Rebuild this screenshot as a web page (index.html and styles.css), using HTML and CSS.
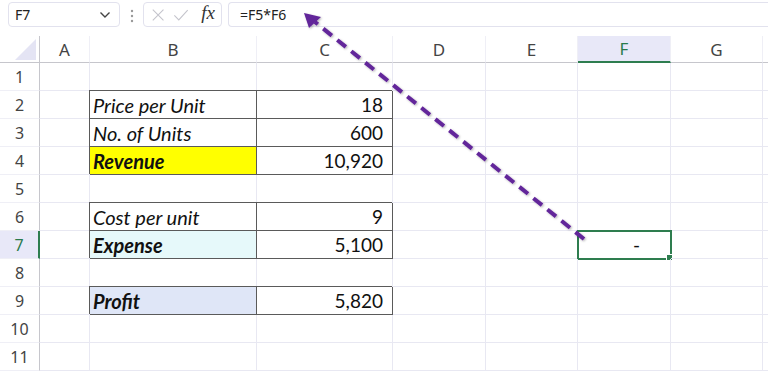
FILE: index.html
```html
<!DOCTYPE html>
<html lang="en">
<head>
    <meta charset="UTF-8">
    <meta name="viewport" content="width=device-width, initial-scale=1.0">
    <title>Profit Sheet</title>
    <link rel="stylesheet" href="styles.css">
</head>
<body>
    <div class="fbar">
        <div class="namebox">
            <span>F7</span>
            <svg width="12" height="8" viewBox="0 0 12 8"><path d="M1.5 1.5 L6 6 L10.5 1.5" fill="none" stroke="#444" stroke-width="1.4"/></svg>
        </div>
        <div class="vdots">
            <svg width="4" height="14" viewBox="0 0 4 14"><circle cx="2" cy="2" r="1.2" fill="#999"/><circle cx="2" cy="7" r="1.2" fill="#999"/><circle cx="2" cy="12" r="1.2" fill="#999"/></svg>
        </div>
        <div class="fxbox">
            <svg width="16" height="16" viewBox="0 0 16 16"><path d="M2 2 L14 14 M14 2 L2 14" stroke="#c4c4cc" stroke-width="1.2"/></svg>
            <svg width="18" height="16" viewBox="0 0 18 16"><path d="M1.5 8.5 L6.5 13.5 L16.5 2.5" fill="none" stroke="#c4c4cc" stroke-width="1.2"/></svg>
            <span class="fx">fx</span>
        </div>
        <div class="formula">=F5*F6</div>
    </div>

    <div class="sheet">
        <!-- header row -->
        <div class="corner"><span class="tri"></span></div>
        <div class="ch">A</div><div class="ch">B</div><div class="ch">C</div><div class="ch">D</div>
        <div class="ch">E</div><div class="ch active">F</div><div class="ch">G</div><div class="ch"></div>

        <div class="rh">1</div>
        <div class="c"></div><div class="c"></div><div class="c"></div><div class="c"></div><div class="c"></div><div class="c"></div><div class="c"></div><div class="c"></div>

        <div class="rh">2</div>
        <div class="c"></div><div class="c bx">Price per Unit</div><div class="c bx num">18</div><div class="c"></div><div class="c"></div><div class="c"></div><div class="c"></div><div class="c"></div>

        <div class="rh">3</div>
        <div class="c"></div><div class="c bx">No. of Units</div><div class="c bx num">600</div><div class="c"></div><div class="c"></div><div class="c"></div><div class="c"></div><div class="c"></div>

        <div class="rh">4</div>
        <div class="c"></div><div class="c bx strong yellow">Revenue</div><div class="c bx num">10,920</div><div class="c"></div><div class="c"></div><div class="c"></div><div class="c"></div><div class="c"></div>

        <div class="rh">5</div>
        <div class="c"></div><div class="c"></div><div class="c"></div><div class="c"></div><div class="c"></div><div class="c"></div><div class="c"></div><div class="c"></div>

        <div class="rh">6</div>
        <div class="c"></div><div class="c bx">Cost per unit</div><div class="c bx num">9</div><div class="c"></div><div class="c"></div><div class="c"></div><div class="c"></div><div class="c"></div>

        <div class="rh active">7</div>
        <div class="c"></div><div class="c bx strong cyan">Expense</div><div class="c bx num">5,100</div><div class="c"></div><div class="c"></div><div class="c num sel">-</div><div class="c"></div><div class="c"></div>

        <div class="rh">8</div>
        <div class="c"></div><div class="c"></div><div class="c"></div><div class="c"></div><div class="c"></div><div class="c"></div><div class="c"></div><div class="c"></div>

        <div class="rh">9</div>
        <div class="c"></div><div class="c bx strong blue">Profit</div><div class="c bx num">5,820</div><div class="c"></div><div class="c"></div><div class="c"></div><div class="c"></div><div class="c"></div>

        <div class="rh">10</div>
        <div class="c"></div><div class="c"></div><div class="c"></div><div class="c"></div><div class="c"></div><div class="c"></div><div class="c"></div><div class="c"></div>

        <div class="rh">11</div>
        <div class="c"></div><div class="c"></div><div class="c"></div><div class="c"></div><div class="c"></div><div class="c"></div><div class="c"></div><div class="c"></div>
    </div>

    <!-- arrow from F7 up to the formula -->
    <svg class="arrow" width="768" height="375" viewBox="0 0 768 375">
        <defs>
            <filter id="soft" x="-10%" y="-10%" width="120%" height="120%">
                <feDropShadow dx="1" dy="1" stdDeviation="0.8" flood-color="#000" flood-opacity="0.3"/>
            </filter>
        </defs>
        <g filter="url(#soft)">
            <line x1="584" y1="239" x2="315" y2="22" stroke="#62259a" stroke-width="4" stroke-dasharray="11 7"/>
            <path d="M304 13 L321 17 L309 28 Z" fill="#62259a"/>
        </g>
    </svg>
</body>
</html>
```

FILE: styles.css
```css
body {
    margin: 0;
    width: 768px;
    height: 375px;
    overflow: hidden;
    background: #fff;
    font-family: "Noto Sans", "Open Sans", sans-serif;
    color: #222;
    position: relative;
}

/* formula bar */
.fbar {
    display: flex;
    align-items: center;
    height: 36px;
    padding: 0 0 0 8px;
    box-sizing: border-box;
    padding-bottom: 7px;
}
.namebox {
    width: 112px;
    height: 25px;
    box-sizing: border-box;
    border: 1px solid #e2e2ee;
    border-radius: 4px;
    display: flex;
    align-items: center;
    justify-content: space-between;
    padding: 0 8px 0 6px;
    font-size: 14px;
}
.vdots {
    width: 23px;
    display: flex;
    justify-content: center;
    padding-top: 2px;
}
.fxbox {
    width: 79px;
    height: 25px;
    box-sizing: border-box;
    border: 1px solid #e2e2ee;
    border-radius: 4px;
    display: flex;
    align-items: center;
    gap: 8px;
    padding: 0 6px 0 7px;
}
.fx {
    font-family: "Liberation Serif", serif;
    font-style: italic;
    font-size: 19px;
    color: #333;
    margin-left: 4px;
    margin-top: -3px;
}
.formula {
    flex: 1;
    height: 25px;
    box-sizing: border-box;
    margin-left: 6px;
    border: 1px solid #e2e2ee;
    border-right: none;
    border-radius: 4px 0 0 4px;
    display: flex;
    align-items: center;
    padding-left: 11px;
    font-size: 14px;
}

/* grid */
.sheet {
    display: grid;
    grid-template-columns: 40px 50px 167px 136px 93px 92px 93px 92px 1fr;
    grid-template-rows: 27px repeat(11, 28px);
}
.corner {
    border-right: 1px solid #c6c6cc;
    border-bottom: 1px solid #c6c6cc;
    display: flex;
    align-items: flex-end;
    justify-content: flex-end;
    padding: 0 3px 2px 0;
}
.tri {
    width: 21px;
    height: 21px;
    background: #e4e4f4;
    clip-path: polygon(100% 0, 100% 100%, 0 100%);
}
.ch {
    border-bottom: 1px solid #c6c6cc;
    border-right: 1px solid #efeff6;
    display: flex;
    align-items: center;
    justify-content: center;
    font-size: 17px;
    color: #444;
}
.ch.active {
    background: #e8e8f8;
    color: #2a7a4c;
    border-bottom: 2px solid #2e7d4f;
}
.rh {
    border-right: 1px solid #c6c6cc;
    border-bottom: 1px solid #efeff6;
    display: flex;
    align-items: center;
    justify-content: center;
    font-size: 16px;
    color: #444;
}
.rh.active {
    background: #e8e8f8;
    color: #2a7a4c;
    border-right: 2px solid #2e7d4f;
}
.c {
    border-right: 1px solid #e8e8f2;
    border-bottom: 1px solid #e8e8f2;
    display: flex;
    align-items: center;
    padding: 0 3px;
    font-family: Lato, "Open Sans", sans-serif;
    font-style: italic;
    font-size: 20px;
    color: #111;
    white-space: nowrap;
    position: relative;
}
.c.bx {
    border-right-color: #5a5a5a;
    border-bottom-color: #5a5a5a;
    box-shadow: -1px -1px 0 #5a5a5a;
}
.c.num {
    font-style: normal;
    font-size: 19px;
    justify-content: flex-end;
    padding-right: 9px;
}
.c.strong {
    font-weight: 700;
}
.yellow { background: #ffff00; }
.cyan { background: #e6f9fa; }
.blue { background: #dfe6f7; }

.c.sel {
    outline: 2px solid #2e7d4f;
    outline-offset: -1px;
    padding-right: 30px;
}
.c.sel::after {
    content: "";
    position: absolute;
    right: -3px;
    bottom: -3px;
    width: 5px;
    height: 5px;
    background: #2e7d4f;
    border: 1px solid #fff;
}

.arrow {
    position: absolute;
    left: 0;
    top: 0;
    pointer-events: none;
}
```
